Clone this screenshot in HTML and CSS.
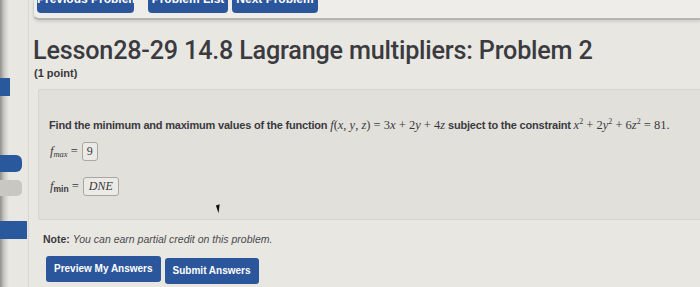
FILE: index.html
```html
<!DOCTYPE html>
<html>
<head>
<meta charset="utf-8">
<link rel="stylesheet" href="styles.css">
</head>
<body>
<div class="page">
  <aside class="sidebar">
    <div class="side-block side-a"></div>
    <div class="side-block side-b"></div>
    <div class="side-block side-c"></div>
    <div class="side-block side-d"></div>
  </aside>
  <main class="main">
    <nav class="nav">
      <span class="nav-btn nav-prev">Previous Problem</span>
      <span class="nav-btn nav-list">Problem List</span>
      <span class="nav-btn nav-next">Next Problem</span>
    </nav>
    <h1 class="title">Lesson28-29 14.8 Lagrange multipliers: Problem 2</h1>
    <div class="points">(1 point)</div>
    <section class="problem">
      <p class="statement">Find the minimum and maximum values of the function <span class="m"><i>f</i>(<i>x</i>, <i>y</i>, <i>z</i>) = 3<i>x</i> + 2<i>y</i> + 4<i>z</i></span> subject to the constraint <span class="m"><i>x</i><sup>2</sup> + 2<i>y</i><sup>2</sup> + 6<i>z</i><sup>2</sup> = 81.</span></p>
      <div class="answer">
        <span class="m"><i>f</i><sub class="sub">max</sub> =</span>
        <span class="ans-box">9</span>
      </div>
      <div class="answer">
        <span class="m"><i>f</i><sub class="sub sub-min">min</sub> =</span>
        <span class="ans-box">DNE</span>
      </div>
      <div class="cursor"></div>
    </section>
    <p class="note"><b>Note:</b> <i>You can earn partial credit on this problem.</i></p>
    <div class="actions">
      <span class="btn">Preview My Answers</span>
      <span class="btn btn-submit">Submit Answers</span>
    </div>
  </main>
</div>
</body>
</html>
```

FILE: styles.css
```css
html, body {
  margin: 0;
  padding: 0;
  width: 700px;
  height: 287px;
  overflow: hidden;
  background: #e8e6e1;
}
.page {
  display: flex;
  height: 287px;
  font-family: "Liberation Sans", Arial, sans-serif;
  color: #38383c;
  background: linear-gradient(to right, #8f8f8d 0px, #c9c7c2 4px, #e9e7e2 9px);
}
.sidebar {
  width: 28px;
  flex: none;
  display: flex;
  flex-direction: column;
  padding-top: 78px;
  border-right: 1px solid #d9d7d2;
}
.side-block {
  background: #2a589d;
}
.side-a {
  width: 10px;
  height: 18px;
}
.side-b {
  margin-top: 59px;
  width: 22px;
  height: 17px;
  border-radius: 0 6px 6px 0;
}
.side-c {
  margin-top: 8px;
  width: 22px;
  height: 16px;
  background: #c8c7c2;
  border-radius: 0 5px 5px 0;
}
.side-d {
  margin-top: 25px;
  width: 27px;
  height: 18px;
}
.main {
  flex: 1;
  min-width: 0;
  padding-left: 4px;
}
.nav {
  height: 13px;
  display: flex;
  align-items: flex-end;
  gap: 4px;
  padding: 0 0 5px 3px;
  border-left: 1px solid #d3d1cc;
  border-bottom: 2px solid #b7b5b1;
  border-bottom-left-radius: 6px;
  background: #efede9;
  overflow: hidden;
  box-shadow: 0 2px 3px rgba(0,0,0,0.10);
}
.nav-btn {
  background: #2b569c;
  color: #fff;
  font-size: 12px;
  font-weight: bold;
  height: 22px;
  line-height: 16px;
  border-radius: 0 0 4px 4px;
  text-align: center;
  flex: none;
  white-space: nowrap;
  overflow: hidden;
}
.nav-prev { width: 97px; }
.nav-list { width: 80px; margin-left: 10px; }
.nav-next { width: 86px; }
.title {
  margin: 16px 0 0 0;
  font-family: Roboto, "Liberation Sans", sans-serif;
  font-size: 25.2px;
  line-height: 30px;
  font-weight: 500;
  color: #3a3a3f;
  letter-spacing: -0.2px;
}
.points {
  font-size: 11px;
  font-weight: bold;
  margin: 0 0 0 1px;
  line-height: 14px;
}
.problem {
  position: relative;
  margin: 9px 0 0 5px;
  height: 131px;
  background: #e2e0db;
  border: 1px solid #d6d4cf;
  border-right: none;
  border-radius: 3px 0 0 3px;
  padding: 0 0 0 10px;
  box-sizing: border-box;
}
.statement {
  margin: 28px 0 0 0;
  font-size: 11px;
  font-weight: bold;
  color: #3a3a3e;
  white-space: nowrap;
  letter-spacing: -0.2px;
}
.m {
  font-family: "Liberation Serif", "DejaVu Serif", serif;
  font-weight: normal;
  font-size: 12.5px;
  letter-spacing: 0;
}
sup {
  font-size: 8px;
  line-height: 0;
}
.answer {
  display: flex;
  align-items: center;
  gap: 4px;
  margin: 9px 0 0 1px;
  height: 19px;
}
.answer + .answer {
  margin-top: 16px;
}
.sub {
  font-family: "Liberation Serif", serif;
  font-style: italic;
  font-size: 8.5px;
  vertical-align: -2px;
  line-height: 0;
}
.sub-min {
  font-family: "Liberation Sans", sans-serif;
  font-style: normal;
  font-weight: bold;
}
.ans-box {
  font-family: "Liberation Serif", serif;
  font-size: 12px;
  font-style: normal;
  border: 1px solid #a9a7a2;
  border-radius: 3px;
  background: #eceae6;
  height: 17px;
  line-height: 17px;
  padding: 0 4px;
}
.answer + .answer .ans-box {
  font-style: italic;
  padding: 0 5px;
}
.cursor {
  position: absolute;
  left: 178px;
  top: 114px;
  width: 0;
  height: 0;
  border-left: 4px solid #111;
  border-right: 4px solid transparent;
  border-bottom: 8px solid transparent;
  transform: rotate(-20deg);
}
.note {
  margin: 13px 0 0 10px;
  font-size: 10.5px;
  color: #3a3a3e;
}
.note b { font-weight: bold; }
.note i { color: #4a4a4e; }
.actions {
  display: flex;
  gap: 4px;
  margin: 11px 0 0 13px;
  align-items: flex-start;
}
.btn {
  background: #2b569c;
  color: #fff;
  font-size: 10px;
  font-weight: bold;
  border-radius: 3px;
  height: 26px;
  line-height: 26px;
  padding: 0 8px;
}
.btn-submit {
  margin-top: 2px;
}
```
